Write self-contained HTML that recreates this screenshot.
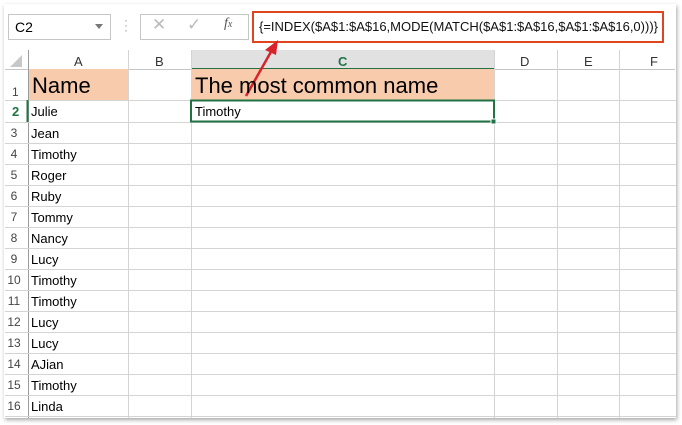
<!DOCTYPE html>
<html><head><style>
body{margin:0;width:682px;height:425px;background:#fff;position:relative;overflow:hidden;font-family:"Liberation Sans",sans-serif}
.a{position:absolute}
.frame{left:4px;top:4px;width:672px;height:414px;background:#fff;box-shadow:1px 2px 4px rgba(0,0,0,.35)}
.t{font-size:13px;color:#000}
</style></head><body>
<div class="a frame"></div>
<div class="a" style="left:8px;top:14px;width:101px;height:24px;border:1px solid #c6c6c6;background:#fff"></div>
<div class="a t" style="left:15px;top:19px;font-size:14px">C2</div>
<div class="a" style="left:95px;top:24px;width:0;height:0;border-left:4px solid transparent;border-right:4px solid transparent;border-top:5px solid #777"></div>
<div class="a" style="left:124px;top:18px;color:#999;font-size:12px;line-height:5px">·<br>·<br>·</div>
<div class="a" style="left:140px;top:14px;width:107px;height:24px;border:1px solid #c6c6c6;background:#fff"></div>
<div class="a" style="left:152px;top:15px;color:#bbb;font-size:17px">✕</div>
<div class="a" style="left:187px;top:15px;color:#bbb;font-size:17px">✓</div>
<div class="a" style="left:224px;top:16px;color:#555;font-size:14px;font-style:italic;font-family:'Liberation Serif',serif">f<span style="font-size:10px">x</span></div>
<div class="a" style="left:252px;top:11px;width:408px;height:28px;border:2px solid #e04520;background:#fff"></div>
<div class="a t" style="left:259px;top:19px;font-size:13px;color:#111;letter-spacing:0px">{=INDEX($A$1:$A$16,MODE(MATCH($A$1:$A$16,$A$1:$A$16,0)))}</div>
<div class="a" style="left:5px;top:50px;width:670px;height:19px;background:#fff;border-bottom:1px solid #c6c6c6"></div>
<div class="a" style="left:191px;top:50px;width:303px;height:18px;background:#e1e1e1;border-bottom:2px solid #217346"></div>
<div class="a" style="left:10px;top:55px;width:0;height:0;border-left:12px solid transparent;border-bottom:12px solid #c8c8c8"></div>
<svg class="a" style="left:0;top:0" width="682" height="425">
<g stroke="#d4d4d4" stroke-width="1">
<line x1="28.5" y1="50" x2="28.5" y2="418"/><line x1="128.5" y1="50" x2="128.5" y2="418"/><line x1="191.5" y1="50" x2="191.5" y2="418"/><line x1="494.5" y1="50" x2="494.5" y2="418"/><line x1="557.5" y1="50" x2="557.5" y2="418"/><line x1="619.5" y1="50" x2="619.5" y2="418"/>
</g>
</svg>
<div class="a" style="left:28px;top:69px;width:100px;height:31px;background:#f8cbad"></div>
<div class="a" style="left:191px;top:69px;width:303px;height:31px;background:#f8cbad"></div>
<svg class="a" style="left:0;top:0" width="682" height="425">
<line x1="28.5" y1="50" x2="28.5" y2="418" stroke="#9b9b9b"/>
<g stroke="#d4d4d4">
<line x1="5" y1="100.5" x2="676" y2="100.5"/>
<line x1="5" y1="122.5" x2="676" y2="122.5"/><line x1="5" y1="143.5" x2="676" y2="143.5"/><line x1="5" y1="164.5" x2="676" y2="164.5"/><line x1="5" y1="185.5" x2="676" y2="185.5"/><line x1="5" y1="206.5" x2="676" y2="206.5"/><line x1="5" y1="227.5" x2="676" y2="227.5"/><line x1="5" y1="248.5" x2="676" y2="248.5"/><line x1="5" y1="269.5" x2="676" y2="269.5"/><line x1="5" y1="290.5" x2="676" y2="290.5"/><line x1="5" y1="311.5" x2="676" y2="311.5"/><line x1="5" y1="332.5" x2="676" y2="332.5"/><line x1="5" y1="353.5" x2="676" y2="353.5"/><line x1="5" y1="374.5" x2="676" y2="374.5"/><line x1="5" y1="395.5" x2="676" y2="395.5"/><line x1="5" y1="416.5" x2="676" y2="416.5"/>
</g>
<line x1="27.5" y1="100" x2="27.5" y2="122" stroke="#217346" stroke-width="2"/>
<rect x="191" y="100.5" width="303" height="21" fill="none" stroke="#217346" stroke-width="2"/>
<rect x="491" y="119" width="5" height="5" fill="#217346" stroke="#fff" stroke-width="1"/>
<line x1="246" y1="96" x2="272" y2="50" stroke="#d9232a" stroke-width="2.5"/>
<polygon points="278,40 265,50 276,55" fill="#d9232a"/>
</svg>
<div class="a" style="left:5px;top:54px;font-size:13px;color:#333">
<span class="a" style="left:69px">A</span><span class="a" style="left:150px">B</span><span class="a" style="left:333px;color:#217346;font-weight:bold">C</span><span class="a" style="left:515px">D</span><span class="a" style="left:579px">E</span><span class="a" style="left:645px">F</span></div>
<div class="a" style="left:32px;top:73px;font-size:22px">Name</div>
<div class="a" style="left:195px;top:73px;font-size:22px">The most common name</div>
<div class="a t" style="left:195px;top:104px">Timothy</div>
<div class="a" style="left:12px;top:85px;font-size:12px;color:#444">1</div>
<div class="a" style="left:12px;top:104px;font-size:13px;color:#217346;font-weight:bold">2</div>
<div class="a t" style="left:31px;top:104px">Julie</div>
<div class="a" style="left:0;top:123px;width:130px;font-size:13px;line-height:21px">
<div style="display:flex"><span style="width:28px;text-align:center;color:#444;font-size:12px">3</span><span style="padding-left:3px">Jean</span></div>
<div style="display:flex"><span style="width:28px;text-align:center;color:#444;font-size:12px">4</span><span style="padding-left:3px">Timothy</span></div>
<div style="display:flex"><span style="width:28px;text-align:center;color:#444;font-size:12px">5</span><span style="padding-left:3px">Roger</span></div>
<div style="display:flex"><span style="width:28px;text-align:center;color:#444;font-size:12px">6</span><span style="padding-left:3px">Ruby</span></div>
<div style="display:flex"><span style="width:28px;text-align:center;color:#444;font-size:12px">7</span><span style="padding-left:3px">Tommy</span></div>
<div style="display:flex"><span style="width:28px;text-align:center;color:#444;font-size:12px">8</span><span style="padding-left:3px">Nancy</span></div>
<div style="display:flex"><span style="width:28px;text-align:center;color:#444;font-size:12px">9</span><span style="padding-left:3px">Lucy</span></div>
<div style="display:flex"><span style="width:28px;text-align:center;color:#444;font-size:12px">10</span><span style="padding-left:3px">Timothy</span></div>
<div style="display:flex"><span style="width:28px;text-align:center;color:#444;font-size:12px">11</span><span style="padding-left:3px">Timothy</span></div>
<div style="display:flex"><span style="width:28px;text-align:center;color:#444;font-size:12px">12</span><span style="padding-left:3px">Lucy</span></div>
<div style="display:flex"><span style="width:28px;text-align:center;color:#444;font-size:12px">13</span><span style="padding-left:3px">Lucy</span></div>
<div style="display:flex"><span style="width:28px;text-align:center;color:#444;font-size:12px">14</span><span style="padding-left:3px">AJian</span></div>
<div style="display:flex"><span style="width:28px;text-align:center;color:#444;font-size:12px">15</span><span style="padding-left:3px">Timothy</span></div>
<div style="display:flex"><span style="width:28px;text-align:center;color:#444;font-size:12px">16</span><span style="padding-left:3px">Linda</span></div>
</div>
</body></html>
